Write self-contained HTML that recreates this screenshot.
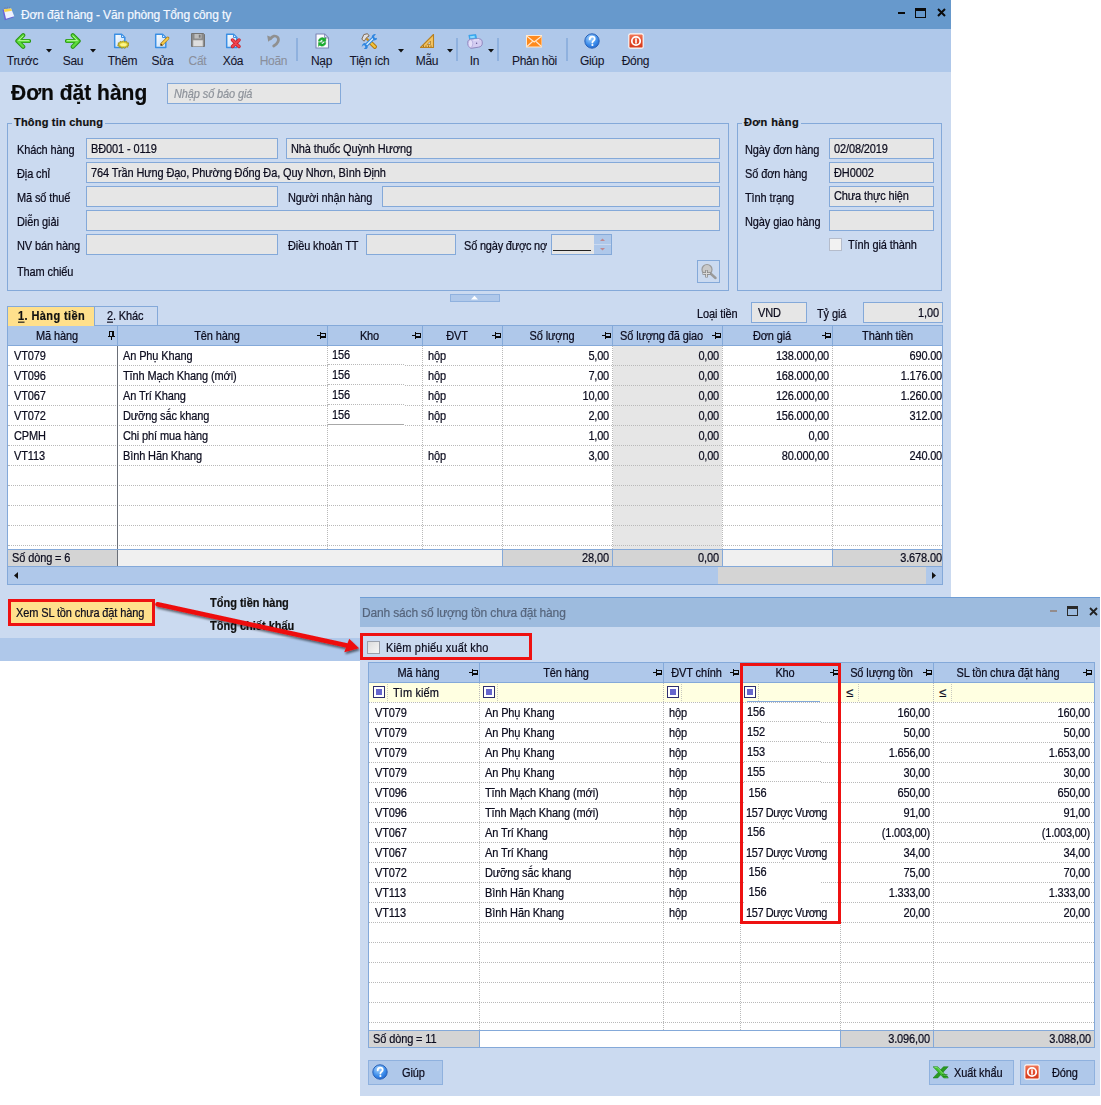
<!DOCTYPE html>
<html><head><meta charset="utf-8"><title>Don dat hang</title><style>
*{box-sizing:border-box;margin:0;padding:0}
html,body{width:1101px;height:1105px;background:#fff;overflow:hidden}
body{font-family:"Liberation Sans",sans-serif;font-size:11px;letter-spacing:-0.12px;color:#0c0c1e;-webkit-text-stroke-width:0.2px;position:relative}
.a{position:absolute}
.t{position:absolute;white-space:nowrap;line-height:14px;height:14px;transform:scaleY(1.12)}
.s{display:inline-block;transform:scaleY(1.12)}
.fld{position:absolute;background:#e6e6e6;border:1px solid #84a9d9;height:21px;line-height:21px;padding-left:4px;white-space:nowrap;overflow:hidden}
.fs{position:absolute;border:1px solid #84a9d9}
.lg{position:absolute;font-weight:bold;font-size:11px;letter-spacing:-0.12px;line-height:14px;background:#cbdaf0;padding:0 2px;white-space:nowrap;color:#111}
.tb{position:absolute;font-size:12px;letter-spacing:-0.3px;-webkit-text-stroke-width:0.08px;line-height:14px;white-space:nowrap;text-align:center;color:#15152a}
.hd{position:absolute;background:#afc8ea;text-align:center;line-height:21px;height:19px;white-space:nowrap;overflow:hidden}
.c{position:absolute;height:20px;line-height:20px;white-space:nowrap;overflow:hidden;transform:scaleY(1.12)}
.r{text-align:right;letter-spacing:-0.2px}
</style></head><body>
<div class="a" style="left:0;top:0;width:951px;height:661px;background:#cbdaf0"></div>
<div class="a" style="left:0;top:0;width:951px;height:29px;background:#6799cc"></div>
<div class="a" style="left:0;top:29px;width:951px;height:43px;background:#afc8ea"></div>
<div class="a" style="left:0;top:638px;width:951px;height:23px;background:#afc8ea"></div>
<div class="t" style="left:21px;top:7px;transform:none;font-size:12px;line-height:16px;height:16px;color:#f4f8ff">Đơn đặt hàng - Văn phòng Tổng công ty</div>
<svg class="a" style="left:0;top:4px" width="18" height="20" viewBox="0 4 18 20"><path d="M2.500 9.500L4.800 20.300 13.800 17.300 11.200 9z" fill="#6a62d8"/><path d="M3.800 9.300l7.300-.8 3.200 7.800-8.300 2.500z" fill="#eef2ff"/><path d="M3.800 9.300l7.300-.8 .9 2.300-7.600 1.200z" fill="#f7d44a"/><path d="M4.600 8.800l.6-1.700M7 8.500l.5-1.700M9.400 8.300l.5-1.600" stroke="#7a6a9a" stroke-width="1" opacity=".6"/></svg>
<div class="a" style="left:898px;top:12px;width:7px;height:2px;background:#0a0a0a"></div>
<div class="a" style="left:915px;top:8px;width:11px;height:10px;border:1px solid #0a0a0a;border-top-width:3px"></div>
<svg class="a" style="left:937px;top:8px" width="9" height="9" viewBox="0 0 9 9"><path d="M1 1l7 7M8 1l-7 7" stroke="#0a0a0a" stroke-width="2"/></svg>
<svg width="0" height="0" class="a"><defs><linearGradient id="gd" x1="0" y1="0" x2="1" y2="1"><stop offset="0" stop-color="#ffffff"/><stop offset="1" stop-color="#bcd9f7"/></linearGradient><linearGradient id="gg" x1="0" y1="0" x2="0" y2="1"><stop offset="0" stop-color="#8ae868"/><stop offset="1" stop-color="#2fb81a"/></linearGradient><radialGradient id="gh" cx=".4" cy=".3" r=".8"><stop offset="0" stop-color="#a9d6ff"/><stop offset=".6" stop-color="#3a8bea"/><stop offset="1" stop-color="#1d5fc8"/></radialGradient><linearGradient id="gr" x1="0" y1="0" x2="0" y2="1"><stop offset="0" stop-color="#f0795a"/><stop offset=".5" stop-color="#e24a2a"/><stop offset="1" stop-color="#d63a1c"/></linearGradient></defs></svg>
<svg class="a" style="left:14.5px;top:32.5px" width="16" height="16" viewBox="0 0 16 16"><path d="M14 8H2.600M8.200 2.300L2.400 8l5.800 5.700" fill="none" stroke="#2a9614" stroke-width="4.200" stroke-linecap="round" stroke-linejoin="round"/><path d="M14 8H2.800M8.200 2.400L2.600 8l5.600 5.600" fill="none" stroke="#5fdc3c" stroke-width="2.300" stroke-linecap="round" stroke-linejoin="round"/><path d="M13.500 7.500H4M8 3L3.500 7.500" fill="none" stroke="#b4f59a" stroke-width=".9" stroke-linecap="round"/></svg>
<div class="tb" style="left:-17.5px;top:53.5px;width:80px;color:#15152a">Trước</div>
<svg class="a" style="left:46px;top:49px" width="6" height="4" viewBox="0 0 6 4"><path d="M0 0h6l-3 3.5z" fill="#111"/></svg>
<svg class="a" style="left:64.5px;top:32.5px" width="16" height="16" viewBox="0 0 16 16"><path d="M2 8h11.400M7.800 2.300L13.600 8l-5.800 5.700" fill="none" stroke="#2a9614" stroke-width="4.200" stroke-linecap="round" stroke-linejoin="round"/><path d="M2 8h11.200M7.800 2.400L13.400 8l-5.600 5.600" fill="none" stroke="#5fdc3c" stroke-width="2.300" stroke-linecap="round" stroke-linejoin="round"/><path d="M2.500 7.500H12M8 3l4.500 4.500" fill="none" stroke="#b4f59a" stroke-width=".9" stroke-linecap="round"/></svg>
<div class="tb" style="left:33px;top:53.5px;width:80px;color:#15152a">Sau</div>
<svg class="a" style="left:90px;top:49px" width="6" height="4" viewBox="0 0 6 4"><path d="M0 0h6l-3 3.5z" fill="#111"/></svg>
<svg class="a" style="left:112.5px;top:32.5px" width="16" height="16" viewBox="0 0 16 16"><path d="M1.700 1.200h6.800l3.300 3.300V14.600H1.700z" fill="url(#gd)" stroke="#3a8fe4" stroke-width="1.500" stroke-linejoin="round"/><path d="M8.500 1.200v3.300h3.300z" fill="#e6f1fd" stroke="#3a8fe4" stroke-width="1" stroke-linejoin="round"/><path d="M10.40 7.70 L11.67 9.01 L13.64 8.32 L13.80 9.83 L15.86 9.98 L14.85 11.22 L16.34 12.16 L14.49 12.72 L14.93 14.15 L12.83 13.87 L12.09 15.34 L10.40 14.30 L8.71 15.34 L7.97 13.87 L5.87 14.15 L6.31 12.72 L4.46 12.16 L5.95 11.22 L4.94 9.98 L7.00 9.83 L7.16 8.32 L9.13 9.01z" fill="#e0d236" stroke="#9c8e14" stroke-width=".8" stroke-linejoin="miter"/><ellipse cx="10.4" cy="11.6" rx="3.300" ry="1.700" fill="#faf58c"/></svg>
<div class="tb" style="left:82.5px;top:53.5px;width:80px;color:#15152a">Thêm</div>
<svg class="a" style="left:154px;top:32.5px" width="16" height="16" viewBox="0 0 16 16"><path d="M1.700 1.200h6.800l3.300 3.300V14.600H1.700z" fill="url(#gd)" stroke="#3a8fe4" stroke-width="1.500" stroke-linejoin="round"/><path d="M8.500 1.200v3.300h3.300z" fill="#e6f1fd" stroke="#3a8fe4" stroke-width="1" stroke-linejoin="round"/><path d="M7.800 11.200l6-6" stroke="#b07c18" stroke-width="3.100" stroke-linecap="round"/><path d="M7.900 11.100l5.800-5.800" stroke="#f9cf4a" stroke-width="1.800" stroke-linecap="round"/><path d="M6.300 12.800l.6-2.400 1.800 1.800z" fill="#3a2a10"/></svg>
<div class="tb" style="left:122.5px;top:53.5px;width:80px;color:#15152a">Sửa</div>
<svg class="a" style="left:190px;top:32px" width="16" height="16" viewBox="0 0 16 16"><path d="M1.500 1.500h12l1 1v12h-13z" fill="#8a8a8a" stroke="#747474" stroke-width="1"/><rect x="4.500" y="2" width="7" height="4.500" fill="#bdbdbd"/><rect x="8.800" y="2.700" width="1.800" height="3" fill="#7a7a7a"/><rect x="3" y="8" width="10" height="6.500" fill="#dedede" stroke="#9a9a9a" stroke-width=".6"/></svg>
<div class="tb" style="left:157.5px;top:53.5px;width:80px;color:#8a8f9c">Cất</div>
<svg class="a" style="left:224.5px;top:32.5px" width="16" height="16" viewBox="0 0 16 16"><path d="M1.700 1.200h6.800l3.300 3.300V14.600H1.700z" fill="url(#gd)" stroke="#3a8fe4" stroke-width="1.500" stroke-linejoin="round"/><path d="M8.500 1.200v3.300h3.300z" fill="#e6f1fd" stroke="#3a8fe4" stroke-width="1" stroke-linejoin="round"/><path d="M7.500 7l6.500 6.500M14 7L7.500 13.500" stroke="#c81e28" stroke-width="3.400" stroke-linecap="round"/><path d="M7.500 7l6.500 6.500M14 7L7.500 13.500" stroke="#f0444e" stroke-width="1.900" stroke-linecap="round"/></svg>
<div class="tb" style="left:193px;top:53.5px;width:80px;color:#15152a">Xóa</div>
<svg class="a" style="left:264.5px;top:32.5px" width="16" height="16" viewBox="0 0 16 16"><path d="M5.500 5.800C7 3 10.500 2 12.500 4.200c2.200 2.500.5 6.300-3.800 8.800" fill="none" stroke="#909090" stroke-width="2.700" stroke-linecap="round"/><path d="M2.200 2.500l5.800 2.300-4.800 4z" fill="#909090"/></svg>
<div class="tb" style="left:233.5px;top:53.5px;width:80px;color:#8a8f9c">Hoãn</div>
<div class="a" style="left:296px;top:38px;width:2px;height:23px;background:#8fb1de"></div>
<svg class="a" style="left:313.5px;top:32.5px" width="16" height="16" viewBox="0 0 16 16"><path d="M2 1h8.500l4 4V15H2z" fill="#fafcff" stroke="#7f86b6" stroke-width="1.100" stroke-linejoin="round"/><path d="M10.500 1v4h4z" fill="#dfe6f2" stroke="#7f86b6" stroke-width=".8"/><path d="M4.300 8.200a3.800 3.800 0 0 1 6.300-2.600l1.200-1.200v4H7.800l1.400-1.400a2 2 0 0 0-3 1.200z" fill="#18b22e" stroke="#0f8a20" stroke-width=".4"/><path d="M12 9.600a3.800 3.800 0 0 1-6.300 2.600l-1.200 1.200v-4h4l-1.400 1.400a2 2 0 0 0 3-1.200z" fill="#18b22e" stroke="#0f8a20" stroke-width=".4"/></svg>
<div class="tb" style="left:281.5px;top:53.5px;width:80px;color:#15152a">Nạp</div>
<svg class="a" style="left:360.5px;top:32.5px" width="16" height="16" viewBox="0 0 16 16"><path d="M6 6l8 8" stroke="#c98f1e" stroke-width="2.300" stroke-linecap="round"/><path d="M10 10l3.800 3.800" stroke="#b37610" stroke-width="4.200" stroke-linecap="round"/><path d="M10 10l3.800 3.800" stroke="#f2c53c" stroke-width="2.300" stroke-linecap="round"/><path d="M.8 6.200L2.800 1.600 6.500.7 8.200 3 5.700 4.400 3.200 8.200z" fill="#e2e0e0" stroke="#7d6a58" stroke-width="1" stroke-linejoin="round"/><path d="M12.800 4.700L4.700 12.800" stroke="#2f86e0" stroke-width="3.600"/><path d="M12 5.500L5.500 12" stroke="#d6f0ff" stroke-width="1.500"/><path d="M10.700 3.600a3.200 3.200 0 0 1 4.300-2.400l-1.900 2 .6 1.700 1.900.3 1-1.600a3.200 3.200 0 0 1-3.300 3.800z" fill="#2f86e0"/><path d="M6.800 13.900a3.200 3.200 0 0 1-4.300 2.400l1.900-2-.6-1.700-1.900-.3-1 1.600a3.200 3.200 0 0 1 3.300-3.800z" fill="#2f86e0"/></svg>
<div class="tb" style="left:329.5px;top:53.5px;width:80px;color:#15152a">Tiện ích</div>
<svg class="a" style="left:398px;top:49px" width="6" height="4" viewBox="0 0 6 4"><path d="M0 0h6l-3 3.5z" fill="#111"/></svg>
<svg class="a" style="left:418.5px;top:32.5px" width="16" height="16" viewBox="0 0 16 16"><path d="M14.500 1.500V14.500H1.500z" fill="#f3c463" stroke="#b8801f" stroke-width="1.100" stroke-linejoin="round"/><path d="M11.500 8v3.500H8z" fill="#b9cfec" stroke="#b8801f" stroke-width=".8" stroke-linejoin="round"/><path d="M4.500 14v-1.600M7 14v-1.600M9.500 14v-1.600M12 14v-1.600" stroke="#8a5a10" stroke-width=".8"/></svg>
<div class="tb" style="left:387px;top:53.5px;width:80px;color:#15152a">Mẫu</div>
<svg class="a" style="left:447px;top:49px" width="6" height="4" viewBox="0 0 6 4"><path d="M0 0h6l-3 3.5z" fill="#111"/></svg>
<div class="a" style="left:456px;top:38px;width:2px;height:23px;background:#8fb1de"></div>
<svg class="a" style="left:466.5px;top:32.5px" width="16" height="16" viewBox="0 0 16 16"><path d="M1.800 2.300l7-.8 1.100 5.200-7 .5z" fill="#38aef4" stroke="#2a94e0" stroke-width=".6" stroke-linejoin="round"/><path d="M3 3.300l4.500-.5.400 2-4.500.4z" fill="#8fdcff"/><path d="M.7 9.500C.7 7 2.800 5.900 5.500 6l7-.2c2 .2 2.800 2 2.800 4.200 0 2.500-1.300 3.800-3.800 4.200L5 15.200C2.200 15.500.7 13 .7 9.500z" fill="#d3ccf1" stroke="#8a7fb8" stroke-width=".9"/><ellipse cx="3.500" cy="10.600" rx="2.300" ry="3.900" fill="#e4dff9" stroke="#a59cd4" stroke-width=".6"/><circle cx="9.600" cy="10.200" r=".7" fill="#5f5590"/><path d="M6.500 7l5.500-.3" stroke="#f0ecff" stroke-width="1"/></svg>
<div class="tb" style="left:434.5px;top:53.5px;width:80px;color:#15152a">In</div>
<svg class="a" style="left:488px;top:49px" width="6" height="4" viewBox="0 0 6 4"><path d="M0 0h6l-3 3.5z" fill="#111"/></svg>
<div class="a" style="left:497px;top:38px;width:2px;height:23px;background:#8fb1de"></div>
<svg class="a" style="left:526px;top:32.5px" width="16" height="16" viewBox="0 0 16 16"><rect x=".5" y="2.500" width="15.500" height="11.500" fill="#ff8a1c" stroke="#ffe9cf" stroke-width="1"/><path d="M1 3.200l7.200 5.800 7.300-5.800M1 13.500l5.500-5M15.500 13.500l-5.500-5" fill="none" stroke="#ffe9d0" stroke-width="1.100"/></svg>
<div class="tb" style="left:494.5px;top:53.5px;width:80px;color:#15152a">Phản hồi</div>
<div class="a" style="left:566px;top:38px;width:2px;height:23px;background:#8fb1de"></div>
<svg class="a" style="left:583.5px;top:32.5px" width="16" height="16" viewBox="0 0 16 16"><circle cx="8" cy="8" r="7.200" fill="url(#gh)" stroke="#2a62b8" stroke-width="1"/><path d="M5.700 6.300c0-1.600 1.100-2.600 2.500-2.600 1.500 0 2.500.9 2.500 2.200 0 1.800-2.300 1.900-2.300 3.600" fill="none" stroke="#fff" stroke-width="1.800" stroke-linecap="round"/><circle cx="8.400" cy="12" r="1.100" fill="#fff"/></svg>
<div class="tb" style="left:552px;top:53.5px;width:80px;color:#15152a">Giúp</div>
<svg class="a" style="left:628px;top:32.5px" width="16" height="16" viewBox="0 0 16 16"><rect x=".3" y=".3" width="15.400" height="15.400" rx="2" fill="#fff6f2"/><rect x="1.400" y="1.400" width="13.200" height="13.200" rx="1.200" fill="url(#gr)"/><circle cx="8" cy="8" r="4.200" fill="none" stroke="#fff" stroke-width="1.800"/><path d="M8 6v4" stroke="#fff" stroke-width="1.600" stroke-linecap="round"/></svg>
<div class="tb" style="left:595.5px;top:53.5px;width:80px;color:#15152a">Đóng</div>
<div class="t" style="left:11px;top:79px;font-size:21px;font-weight:bold;line-height:28px;height:28px;color:#0a0a0a;letter-spacing:0;transform:scaleY(1.06)">Đơn đặt hàng</div>
<div class="fld" style="left:167px;top:83px;width:174px;font-style:italic;color:#8e939b;padding-left:6px"><span class="s">Nhập số báo giá</span></div>
<div class="fs" style="left:7px;top:123px;width:722px;height:168px"></div>
<div class="lg" style="left:12px;top:115px;letter-spacing:.2px">Thông tin chung</div>
<div class="t" style="left:17px;top:143px;">Khách hàng</div>
<div class="t" style="left:17px;top:167px;">Địa chỉ</div>
<div class="t" style="left:17px;top:191px;">Mã số thuế</div>
<div class="t" style="left:17px;top:215px;">Diễn giải</div>
<div class="t" style="left:17px;top:239px;">NV bán hàng</div>
<div class="t" style="left:17px;top:265px;">Tham chiếu</div>
<div class="fld" style="left:86px;top:138px;width:192px;"><span class="s">BĐ001 - 0119</span></div>
<div class="fld" style="left:286px;top:138px;width:434px;"><span class="s">Nhà thuốc Quỳnh Hương</span></div>
<div class="fld" style="left:86px;top:162px;width:634px;letter-spacing:-0.12px"><span class="s">764 Trần Hưng Đạo, Phường Đống Đa, Quy Nhơn, Bình Định</span></div>
<div class="fld" style="left:86px;top:186px;width:192px;"><span class="s"></span></div>
<div class="t" style="left:288px;top:191px;">Người nhận hàng</div>
<div class="fld" style="left:382px;top:186px;width:338px;"><span class="s"></span></div>
<div class="fld" style="left:86px;top:210px;width:634px;"><span class="s"></span></div>
<div class="fld" style="left:86px;top:234px;width:192px;"><span class="s"></span></div>
<div class="t" style="left:288px;top:239px;">Điều khoản TT</div>
<div class="fld" style="left:366px;top:234px;width:90px;"><span class="s"></span></div>
<div class="t" style="left:464px;top:239px;letter-spacing:-0.2px">Số ngày được nợ</div>
<div class="a" style="left:551px;top:234px;width:61px;height:21px;background:#e6e6e6;border:1px solid #84a9d9"></div>
<div class="a" style="left:553px;top:250px;width:38px;height:1px;background:#222"></div>
<div class="a" style="left:594px;top:235px;width:17px;height:19px;background:#afc8ea"></div>
<div class="a" style="left:594px;top:244px;width:17px;height:1px;background:#cbdaf0"></div>
<svg class="a" style="left:600px;top:238px" width="5" height="14" viewBox="0 0 5 14"><path d="M0 3l2.500-2.500L5 3z" fill="#c08890"/><path d="M0 10l2.500 2.500L5 10z" fill="#c08890"/></svg>
<div class="a" style="left:697px;top:260px;width:23px;height:23px;background:#cbdaf0;border:1px solid #84a9d9"></div>
<svg class="a" style="left:700px;top:263px" width="17" height="17" viewBox="0 0 17 17"><circle cx="7" cy="6.500" r="5" fill="#c9c9c9" stroke="#9a9a9a" stroke-width="1.200"/><path d="M10.500 10.500l5 4.500" stroke="#9a9a9a" stroke-width="2.400" stroke-linecap="round"/><path d="M2.500 10.500h8M6.500 7v7.500" stroke="#8a8a8a" stroke-width="2.600"/><path d="M3 10.500h7M6.500 7.500v6.500" stroke="#d8d8d8" stroke-width="1"/></svg>
<div class="a" style="left:450px;top:294px;width:50px;height:8px;background:#afc8ea;border:1px solid #8fb1de"></div>
<svg class="a" style="left:471px;top:295px" width="7" height="5" viewBox="0 0 7 5"><path d="M0 4.500L3.500 .8 7 4.500z" fill="#fff"/></svg>
<div class="fs" style="left:737px;top:123px;width:205px;height:168px"></div>
<div class="lg" style="left:742px;top:115px;letter-spacing:.4px">Đơn hàng</div>
<div class="t" style="left:745px;top:143px;">Ngày đơn hàng</div>
<div class="t" style="left:745px;top:167px;">Số đơn hàng</div>
<div class="t" style="left:745px;top:191px;">Tình trạng</div>
<div class="t" style="left:745px;top:215px;">Ngày giao hàng</div>
<div class="fld" style="left:829px;top:138px;width:105px;"><span class="s">02/08/2019</span></div>
<div class="fld" style="left:829px;top:162px;width:105px;"><span class="s">ĐH0002</span></div>
<div class="fld" style="left:829px;top:186px;width:105px;line-height:19px"><span class="s">Chưa thực hiện</span></div>
<div class="fld" style="left:829px;top:210px;width:105px;"><span class="s"></span></div>
<div class="a" style="left:829px;top:238px;width:13px;height:13px;background:#f2f2f2;border:1px solid #b5bccb"></div>
<div class="t" style="left:848px;top:238px;">Tính giá thành</div>
<div class="t" style="left:697px;top:307px;">Loại tiền</div>
<div class="fld" style="left:751px;top:302px;width:56px;padding-left:6px"><span class="s">VND</span></div>
<div class="t" style="left:817px;top:307px;">Tỷ giá</div>
<div class="fld" style="left:863px;top:302px;width:80px;text-align:right;padding-right:3px"><span class="s">1,00</span></div>
<div class="a" style="left:7px;top:325px;width:936px;height:260px;background:#fff;border:1px solid #84a9d9"></div>
<div class="a" style="left:8px;top:326px;width:934px;height:20px;background:#afc8ea;border-bottom:1px solid #84a9d9"></div>
<div class="hd" style="left:8px;top:326px;width:109px;padding-right:11px;"><span class="s">Mã hàng</span><svg class="a" style="right:2px;top:5px" width="7" height="9" viewBox="0 0 7 9" shape-rendering="crispEdges"><path d="M1 0h5v1H1zM1 0h1v5H1zM4 0h2v5H4zM0 5h7v1H0zM3 6h1v3H3z" fill="#0a0a0a"/></svg></div>
<div class="hd" style="left:118px;top:326px;width:209px;padding-right:11px;"><span class="s">Tên hàng</span><svg class="a" style="right:1px;top:6px" width="9" height="7" viewBox="0 0 9 7" shape-rendering="crispEdges"><path d="M0 3h3v1H0zM3 0h1v7H3zM4 1h5v1H4zM8 1h1v5H8zM4 4h5v2H4z" fill="#0a0a0a"/></svg></div>
<div class="a" style="left:117px;top:326px;width:1px;height:20px;background:#84a9d9"></div>
<div class="hd" style="left:328px;top:326px;width:94px;padding-right:11px;"><span class="s">Kho</span><svg class="a" style="right:1px;top:6px" width="9" height="7" viewBox="0 0 9 7" shape-rendering="crispEdges"><path d="M0 3h3v1H0zM3 0h1v7H3zM4 1h5v1H4zM8 1h1v5H8zM4 4h5v2H4z" fill="#0a0a0a"/></svg></div>
<div class="a" style="left:327px;top:326px;width:1px;height:20px;background:#84a9d9"></div>
<div class="hd" style="left:423px;top:326px;width:79px;padding-right:11px;"><span class="s">ĐVT</span><svg class="a" style="right:1px;top:6px" width="9" height="7" viewBox="0 0 9 7" shape-rendering="crispEdges"><path d="M0 3h3v1H0zM3 0h1v7H3zM4 1h5v1H4zM8 1h1v5H8zM4 4h5v2H4z" fill="#0a0a0a"/></svg></div>
<div class="a" style="left:422px;top:326px;width:1px;height:20px;background:#84a9d9"></div>
<div class="hd" style="left:503px;top:326px;width:109px;padding-right:11px;"><span class="s">Số lượng</span><svg class="a" style="right:1px;top:6px" width="9" height="7" viewBox="0 0 9 7" shape-rendering="crispEdges"><path d="M0 3h3v1H0zM3 0h1v7H3zM4 1h5v1H4zM8 1h1v5H8zM4 4h5v2H4z" fill="#0a0a0a"/></svg></div>
<div class="a" style="left:502px;top:326px;width:1px;height:20px;background:#84a9d9"></div>
<div class="hd" style="left:613px;top:326px;width:109px;padding-right:11px;padding-left:7px;text-align:left;"><span class="s">Số lượng đã giao</span><svg class="a" style="right:1px;top:6px" width="9" height="7" viewBox="0 0 9 7" shape-rendering="crispEdges"><path d="M0 3h3v1H0zM3 0h1v7H3zM4 1h5v1H4zM8 1h1v5H8zM4 4h5v2H4z" fill="#0a0a0a"/></svg></div>
<div class="a" style="left:612px;top:326px;width:1px;height:20px;background:#84a9d9"></div>
<div class="hd" style="left:723px;top:326px;width:109px;padding-right:11px;"><span class="s">Đơn giá</span><svg class="a" style="right:1px;top:6px" width="9" height="7" viewBox="0 0 9 7" shape-rendering="crispEdges"><path d="M0 3h3v1H0zM3 0h1v7H3zM4 1h5v1H4zM8 1h1v5H8zM4 4h5v2H4z" fill="#0a0a0a"/></svg></div>
<div class="a" style="left:722px;top:326px;width:1px;height:20px;background:#84a9d9"></div>
<div class="hd" style="left:833px;top:326px;width:109px;padding-right:0px;"><span class="s">Thành tiền</span></div>
<div class="a" style="left:832px;top:326px;width:1px;height:20px;background:#84a9d9"></div>
<div class="a" style="left:7px;top:306px;width:88px;height:20px;background:#ffe08c;border:1px solid #84a9d9;border-bottom:none"></div>
<div class="t" style="left:18px;top:309px;font-weight:bold;font-size:11px;letter-spacing:.4px;color:#111"><u>1</u>. Hàng tiền</div>
<div class="a" style="left:94px;top:306px;width:64px;height:19px;background:#cbdaf0;border:1px solid #84a9d9;border-bottom:none"></div>
<div class="t" style="left:107px;top:309px"><u>2</u>. Khác</div>
<div class="a" style="left:613px;top:346px;width:109px;height:203px;background:#e6e6e6"></div>
<div class="a" style="left:8px;top:365px;width:934px;height:0;border-top:1px dotted #b9b9b9"></div>
<div class="a" style="left:8px;top:385px;width:934px;height:0;border-top:1px dotted #b9b9b9"></div>
<div class="a" style="left:8px;top:405px;width:934px;height:0;border-top:1px dotted #b9b9b9"></div>
<div class="a" style="left:8px;top:425px;width:934px;height:0;border-top:1px dotted #b9b9b9"></div>
<div class="a" style="left:8px;top:445px;width:934px;height:0;border-top:1px dotted #b9b9b9"></div>
<div class="a" style="left:8px;top:465px;width:934px;height:0;border-top:1px dotted #b9b9b9"></div>
<div class="a" style="left:8px;top:485px;width:934px;height:0;border-top:1px dotted #b9b9b9"></div>
<div class="a" style="left:8px;top:505px;width:934px;height:0;border-top:1px dotted #b9b9b9"></div>
<div class="a" style="left:8px;top:525px;width:934px;height:0;border-top:1px dotted #b9b9b9"></div>
<div class="a" style="left:8px;top:545px;width:934px;height:0;border-top:1px dotted #b9b9b9"></div>
<div class="a" style="left:117px;top:346px;width:1px;height:203px;background:#6a6f78"></div>
<div class="a" style="left:327px;top:346px;width:0;height:203px;border-left:1px dotted #b9b9b9"></div>
<div class="a" style="left:422px;top:346px;width:0;height:203px;border-left:1px dotted #b9b9b9"></div>
<div class="a" style="left:502px;top:346px;width:0;height:203px;border-left:1px dotted #b9b9b9"></div>
<div class="a" style="left:612px;top:346px;width:0;height:203px;border-left:1px dotted #b9b9b9"></div>
<div class="a" style="left:722px;top:346px;width:0;height:203px;border-left:1px dotted #b9b9b9"></div>
<div class="a" style="left:832px;top:346px;width:0;height:203px;border-left:1px dotted #b9b9b9"></div>
<div class="c" style="left:8px;top:346px;width:109px;padding-left:6px">VT079</div>
<div class="c" style="left:118px;top:346px;width:209px;padding-left:5px">An Phụ Khang</div>
<div class="a" style="left:328px;top:346px;width:76px;height:20px;background:#fff"></div>
<div class="a" style="left:328px;top:364px;width:76px;height:0;border-top:1px dotted #b9b9b9"></div>
<div class="c" style="left:332px;top:345px;width:60px">156</div>
<div class="c" style="left:423px;top:346px;width:79px;padding-left:5px">hộp</div>
<div class="c r" style="left:503px;top:346px;width:109px;padding-right:3px">5,00</div>
<div class="c r" style="left:613px;top:346px;width:109px;padding-right:3px">0,00</div>
<div class="c r" style="left:723px;top:346px;width:109px;padding-right:3px">138.000,00</div>
<div class="c r" style="left:833px;top:346px;width:109px;padding-right:0px">690.00</div>
<div class="c" style="left:8px;top:366px;width:109px;padding-left:6px">VT096</div>
<div class="c" style="left:118px;top:366px;width:209px;padding-left:5px">Tĩnh Mạch Khang (mới)</div>
<div class="a" style="left:328px;top:366px;width:76px;height:20px;background:#fff"></div>
<div class="a" style="left:328px;top:384px;width:76px;height:0;border-top:1px dotted #b9b9b9"></div>
<div class="c" style="left:332px;top:365px;width:60px">156</div>
<div class="c" style="left:423px;top:366px;width:79px;padding-left:5px">hộp</div>
<div class="c r" style="left:503px;top:366px;width:109px;padding-right:3px">7,00</div>
<div class="c r" style="left:613px;top:366px;width:109px;padding-right:3px">0,00</div>
<div class="c r" style="left:723px;top:366px;width:109px;padding-right:3px">168.000,00</div>
<div class="c r" style="left:833px;top:366px;width:109px;padding-right:0px">1.176.00</div>
<div class="c" style="left:8px;top:386px;width:109px;padding-left:6px">VT067</div>
<div class="c" style="left:118px;top:386px;width:209px;padding-left:5px">An Trí Khang</div>
<div class="a" style="left:328px;top:386px;width:76px;height:20px;background:#fff"></div>
<div class="a" style="left:328px;top:404px;width:76px;height:0;border-top:1px dotted #b9b9b9"></div>
<div class="c" style="left:332px;top:385px;width:60px">156</div>
<div class="c" style="left:423px;top:386px;width:79px;padding-left:5px">hộp</div>
<div class="c r" style="left:503px;top:386px;width:109px;padding-right:3px">10,00</div>
<div class="c r" style="left:613px;top:386px;width:109px;padding-right:3px">0,00</div>
<div class="c r" style="left:723px;top:386px;width:109px;padding-right:3px">126.000,00</div>
<div class="c r" style="left:833px;top:386px;width:109px;padding-right:0px">1.260.00</div>
<div class="c" style="left:8px;top:406px;width:109px;padding-left:6px">VT072</div>
<div class="c" style="left:118px;top:406px;width:209px;padding-left:5px">Dưỡng sắc khang</div>
<div class="a" style="left:328px;top:406px;width:76px;height:20px;background:#fff"></div>
<div class="a" style="left:328px;top:424px;width:76px;height:1px;background:#a8a8a8"></div>
<div class="c" style="left:332px;top:405px;width:60px">156</div>
<div class="c" style="left:423px;top:406px;width:79px;padding-left:5px">hộp</div>
<div class="c r" style="left:503px;top:406px;width:109px;padding-right:3px">2,00</div>
<div class="c r" style="left:613px;top:406px;width:109px;padding-right:3px">0,00</div>
<div class="c r" style="left:723px;top:406px;width:109px;padding-right:3px">156.000,00</div>
<div class="c r" style="left:833px;top:406px;width:109px;padding-right:0px">312.00</div>
<div class="c" style="left:8px;top:426px;width:109px;padding-left:6px">CPMH</div>
<div class="c" style="left:118px;top:426px;width:209px;padding-left:5px">Chi phí mua hàng</div>
<div class="c r" style="left:503px;top:426px;width:109px;padding-right:3px">1,00</div>
<div class="c r" style="left:613px;top:426px;width:109px;padding-right:3px">0,00</div>
<div class="c r" style="left:723px;top:426px;width:109px;padding-right:3px">0,00</div>
<div class="c" style="left:8px;top:446px;width:109px;padding-left:6px">VT113</div>
<div class="c" style="left:118px;top:446px;width:209px;padding-left:5px">Bình Hãn Khang</div>
<div class="c" style="left:423px;top:446px;width:79px;padding-left:5px">hộp</div>
<div class="c r" style="left:503px;top:446px;width:109px;padding-right:3px">3,00</div>
<div class="c r" style="left:613px;top:446px;width:109px;padding-right:3px">0,00</div>
<div class="c r" style="left:723px;top:446px;width:109px;padding-right:3px">80.000,00</div>
<div class="c r" style="left:833px;top:446px;width:109px;padding-right:0px">240.00</div>
<div class="a" style="left:8px;top:549px;width:934px;height:18px;background:#f0f0f0;border-top:1px solid #84a9d9;border-bottom:1px solid #84a9d9"></div>
<div class="a" style="left:8px;top:550px;width:109px;height:16px;line-height:16px;background:#d4d4d4;white-space:nowrap;overflow:hidden;padding-left:4px"><span class="s">Số dòng = 6</span></div>
<div class="a" style="left:503px;top:550px;width:109px;height:16px;line-height:16px;background:#d4d4d4;white-space:nowrap;overflow:hidden;text-align:right;padding-right:3px"><span class="s">28,00</span></div>
<div class="a" style="left:613px;top:550px;width:109px;height:16px;line-height:16px;background:#d4d4d4;white-space:nowrap;overflow:hidden;text-align:right;padding-right:3px"><span class="s">0,00</span></div>
<div class="a" style="left:833px;top:550px;width:109px;height:16px;line-height:16px;background:#d4d4d4;white-space:nowrap;overflow:hidden;text-align:right;padding-right:0px"><span class="s">3.678.00</span></div>
<div class="a" style="left:117px;top:550px;width:1px;height:16px;background:#6a6f78"></div>
<div class="a" style="left:502px;top:550px;width:1px;height:16px;background:#84a9d9"></div>
<div class="a" style="left:612px;top:550px;width:1px;height:16px;background:#84a9d9"></div>
<div class="a" style="left:722px;top:550px;width:1px;height:16px;background:#84a9d9"></div>
<div class="a" style="left:832px;top:550px;width:1px;height:16px;background:#84a9d9"></div>
<div class="a" style="left:8px;top:567px;width:934px;height:17px;background:#afc8ea"></div>
<div class="a" style="left:718px;top:567px;width:208px;height:17px;background:#d4d4d4"></div>
<svg class="a" style="left:14px;top:572px" width="4" height="7" viewBox="0 0 4 7"><path d="M4 0v7L0 3.500z" fill="#111"/></svg>
<svg class="a" style="left:932px;top:572px" width="4" height="7" viewBox="0 0 4 7"><path d="M0 0v7L4 3.500z" fill="#111"/></svg>
<div class="a" style="left:8px;top:599px;width:147px;height:27px;background:#ffe08c;border:3px solid #ee1111"></div>
<div class="t" style="left:16px;top:606px">Xem SL tồn chưa đặt hàng</div>
<div class="t" style="left:210px;top:596px;font-weight:bold;letter-spacing:0;color:#111">Tổng tiền hàng</div>
<div class="t" style="left:210px;top:619px;font-weight:bold;letter-spacing:0;color:#111">Tổng chiết khấu</div>
<div class="a" style="left:360px;top:597px;width:740px;height:499px;background:#cbdaf0"></div>
<div class="a" style="left:360px;top:597px;width:740px;height:30px;background:#9dbbde;border-top:1px solid #6f9dd4"></div>
<div class="t" style="left:362px;top:605px;font-size:12px;line-height:16px;height:16px;color:#56657c;letter-spacing:-0.16px">Danh sách số lượng tồn chưa đặt hàng</div>
<div class="a" style="left:1050px;top:610px;width:7px;height:2px;background:#948c8c"></div>
<div class="a" style="left:1067px;top:606px;width:11px;height:10px;border:1px solid #2a2a2a;border-top-width:3px"></div>
<svg class="a" style="left:1089px;top:606.5px" width="9" height="9" viewBox="0 0 9 9"><path d="M1 1l7 7M8 1l-7 7" stroke="#222" stroke-width="1.800"/></svg>
<div class="a" style="left:360px;top:633px;width:172px;height:27px;border:3px solid #ee1111"></div>
<div class="a" style="left:367px;top:641px;width:13px;height:13px;background:linear-gradient(135deg,#dcdcdc,#f6f6f6);border:1px solid #9aa0ab"></div>
<div class="t" style="left:386px;top:641px;letter-spacing:.15px">Kiêm phiếu xuất kho</div>
<div class="a" style="left:368px;top:662px;width:727px;height:386px;background:#fff;border:1px solid #84a9d9"></div>
<div class="a" style="left:369px;top:663px;width:725px;height:20px;background:#afc8ea;border-bottom:1px solid #84a9d9"></div>
<div class="hd" style="left:369px;top:663px;width:110px;padding-right:11px"><span class="s">Mã hàng</span><svg class="a" style="right:1px;top:6px" width="9" height="7" viewBox="0 0 9 7" shape-rendering="crispEdges"><path d="M0 3h3v1H0zM3 0h1v7H3zM4 1h5v1H4zM8 1h1v5H8zM4 4h5v2H4z" fill="#0a0a0a"/></svg></div>
<div class="hd" style="left:480px;top:663px;width:183px;padding-right:11px"><span class="s">Tên hàng</span><svg class="a" style="right:1px;top:6px" width="9" height="7" viewBox="0 0 9 7" shape-rendering="crispEdges"><path d="M0 3h3v1H0zM3 0h1v7H3zM4 1h5v1H4zM8 1h1v5H8zM4 4h5v2H4z" fill="#0a0a0a"/></svg></div>
<div class="a" style="left:479px;top:663px;width:1px;height:20px;background:#84a9d9"></div>
<div class="hd" style="left:664px;top:663px;width:76px;padding-right:11px"><span class="s">ĐVT chính</span><svg class="a" style="right:1px;top:6px" width="9" height="7" viewBox="0 0 9 7" shape-rendering="crispEdges"><path d="M0 3h3v1H0zM3 0h1v7H3zM4 1h5v1H4zM8 1h1v5H8zM4 4h5v2H4z" fill="#0a0a0a"/></svg></div>
<div class="a" style="left:663px;top:663px;width:1px;height:20px;background:#84a9d9"></div>
<div class="hd" style="left:741px;top:663px;width:99px;padding-right:11px"><span class="s">Kho</span><svg class="a" style="right:1px;top:6px" width="9" height="7" viewBox="0 0 9 7" shape-rendering="crispEdges"><path d="M0 3h3v1H0zM3 0h1v7H3zM4 1h5v1H4zM8 1h1v5H8zM4 4h5v2H4z" fill="#0a0a0a"/></svg></div>
<div class="a" style="left:740px;top:663px;width:1px;height:20px;background:#84a9d9"></div>
<div class="hd" style="left:841px;top:663px;width:92px;padding-right:11px"><span class="s">Số lượng tồn</span><svg class="a" style="right:1px;top:6px" width="9" height="7" viewBox="0 0 9 7" shape-rendering="crispEdges"><path d="M0 3h3v1H0zM3 0h1v7H3zM4 1h5v1H4zM8 1h1v5H8zM4 4h5v2H4z" fill="#0a0a0a"/></svg></div>
<div class="a" style="left:840px;top:663px;width:1px;height:20px;background:#84a9d9"></div>
<div class="hd" style="left:934px;top:663px;width:159px;padding-right:11px"><span class="s">SL tồn chưa đặt hàng</span><svg class="a" style="right:1px;top:6px" width="9" height="7" viewBox="0 0 9 7" shape-rendering="crispEdges"><path d="M0 3h3v1H0zM3 0h1v7H3zM4 1h5v1H4zM8 1h1v5H8zM4 4h5v2H4z" fill="#0a0a0a"/></svg></div>
<div class="a" style="left:933px;top:663px;width:1px;height:20px;background:#84a9d9"></div>
<div class="a" style="left:369px;top:683px;width:725px;height:19px;background:#ffffe1"></div>
<div class="a" style="left:373px;top:686px;width:12px;height:12px;background:#fff;border:1px solid #2e2e6e"></div>
<div class="a" style="left:376px;top:689px;width:6px;height:6px;background:#6666cc"></div>
<div class="a" style="left:387px;top:684px;width:0;height:17px;border-left:1px dotted #c9c9c0"></div>
<div class="a" style="left:483px;top:686px;width:12px;height:12px;background:#fff;border:1px solid #2e2e6e"></div>
<div class="a" style="left:486px;top:689px;width:6px;height:6px;background:#6666cc"></div>
<div class="a" style="left:497px;top:684px;width:0;height:17px;border-left:1px dotted #c9c9c0"></div>
<div class="a" style="left:667px;top:686px;width:12px;height:12px;background:#fff;border:1px solid #2e2e6e"></div>
<div class="a" style="left:670px;top:689px;width:6px;height:6px;background:#6666cc"></div>
<div class="a" style="left:681px;top:684px;width:0;height:17px;border-left:1px dotted #c9c9c0"></div>
<div class="a" style="left:744px;top:686px;width:12px;height:12px;background:#fff;border:1px solid #2e2e6e"></div>
<div class="a" style="left:747px;top:689px;width:6px;height:6px;background:#6666cc"></div>
<div class="a" style="left:758px;top:684px;width:0;height:17px;border-left:1px dotted #c9c9c0"></div>
<div class="t" style="left:393px;top:686px;letter-spacing:.1px">Tìm kiếm</div>
<div class="t" style="left:846px;top:686px;font-size:13px;transform:none">≤</div>
<div class="a" style="left:858px;top:684px;width:0;height:17px;border-left:1px dotted #c9c9c0"></div>
<div class="t" style="left:939px;top:686px;font-size:13px;transform:none">≤</div>
<div class="a" style="left:951px;top:684px;width:0;height:17px;border-left:1px dotted #c9c9c0"></div>
<div class="a" style="left:369px;top:702px;width:725px;height:0;border-top:1px dotted #b9b9b9"></div>
<div class="a" style="left:369px;top:722px;width:725px;height:0;border-top:1px dotted #b9b9b9"></div>
<div class="a" style="left:369px;top:742px;width:725px;height:0;border-top:1px dotted #b9b9b9"></div>
<div class="a" style="left:369px;top:762px;width:725px;height:0;border-top:1px dotted #b9b9b9"></div>
<div class="a" style="left:369px;top:782px;width:725px;height:0;border-top:1px dotted #b9b9b9"></div>
<div class="a" style="left:369px;top:802px;width:725px;height:0;border-top:1px dotted #b9b9b9"></div>
<div class="a" style="left:369px;top:822px;width:725px;height:0;border-top:1px dotted #b9b9b9"></div>
<div class="a" style="left:369px;top:842px;width:725px;height:0;border-top:1px dotted #b9b9b9"></div>
<div class="a" style="left:369px;top:862px;width:725px;height:0;border-top:1px dotted #b9b9b9"></div>
<div class="a" style="left:369px;top:882px;width:725px;height:0;border-top:1px dotted #b9b9b9"></div>
<div class="a" style="left:369px;top:902px;width:725px;height:0;border-top:1px dotted #b9b9b9"></div>
<div class="a" style="left:369px;top:922px;width:725px;height:0;border-top:1px dotted #b9b9b9"></div>
<div class="a" style="left:369px;top:942px;width:725px;height:0;border-top:1px dotted #b9b9b9"></div>
<div class="a" style="left:369px;top:962px;width:725px;height:0;border-top:1px dotted #b9b9b9"></div>
<div class="a" style="left:369px;top:982px;width:725px;height:0;border-top:1px dotted #b9b9b9"></div>
<div class="a" style="left:369px;top:1002px;width:725px;height:0;border-top:1px dotted #b9b9b9"></div>
<div class="a" style="left:369px;top:1022px;width:725px;height:0;border-top:1px dotted #b9b9b9"></div>
<div class="a" style="left:479px;top:683px;width:0;height:347px;border-left:1px dotted #b9b9b9"></div>
<div class="a" style="left:663px;top:683px;width:0;height:347px;border-left:1px dotted #b9b9b9"></div>
<div class="a" style="left:740px;top:683px;width:0;height:347px;border-left:1px dotted #b9b9b9"></div>
<div class="a" style="left:840px;top:683px;width:0;height:347px;border-left:1px dotted #b9b9b9"></div>
<div class="a" style="left:933px;top:683px;width:0;height:347px;border-left:1px dotted #b9b9b9"></div>
<div class="c" style="left:369px;top:703px;width:110px;padding-left:6px">VT079</div>
<div class="c" style="left:480px;top:703px;width:183px;padding-left:5px">An Phụ Khang</div>
<div class="c" style="left:664px;top:703px;width:76px;padding-left:5px">hộp</div>
<div class="a" style="left:744px;top:703px;width:77px;height:20px;background:#fff"></div>
<div class="a" style="left:744px;top:721px;width:77px;height:0;border-top:1px dotted #b9b9b9"></div>
<div class="a" style="left:747px;top:701px;width:73px;height:1px;background:#84a9d9"></div>
<div class="c" style="left:747px;top:702px;width:60px">156</div>
<div class="c r" style="left:841px;top:703px;width:92px;padding-right:3px">160,00</div>
<div class="c r" style="left:934px;top:703px;width:159px;padding-right:3px">160,00</div>
<div class="c" style="left:369px;top:723px;width:110px;padding-left:6px">VT079</div>
<div class="c" style="left:480px;top:723px;width:183px;padding-left:5px">An Phụ Khang</div>
<div class="c" style="left:664px;top:723px;width:76px;padding-left:5px">hộp</div>
<div class="a" style="left:744px;top:723px;width:77px;height:20px;background:#fff"></div>
<div class="a" style="left:744px;top:741px;width:77px;height:0;border-top:1px dotted #b9b9b9"></div>
<div class="c" style="left:747px;top:722px;width:60px">152</div>
<div class="c r" style="left:841px;top:723px;width:92px;padding-right:3px">50,00</div>
<div class="c r" style="left:934px;top:723px;width:159px;padding-right:3px">50,00</div>
<div class="c" style="left:369px;top:743px;width:110px;padding-left:6px">VT079</div>
<div class="c" style="left:480px;top:743px;width:183px;padding-left:5px">An Phụ Khang</div>
<div class="c" style="left:664px;top:743px;width:76px;padding-left:5px">hộp</div>
<div class="a" style="left:744px;top:743px;width:77px;height:20px;background:#fff"></div>
<div class="a" style="left:744px;top:761px;width:77px;height:0;border-top:1px dotted #b9b9b9"></div>
<div class="c" style="left:747px;top:742px;width:60px">153</div>
<div class="c r" style="left:841px;top:743px;width:92px;padding-right:3px">1.656,00</div>
<div class="c r" style="left:934px;top:743px;width:159px;padding-right:3px">1.653,00</div>
<div class="c" style="left:369px;top:763px;width:110px;padding-left:6px">VT079</div>
<div class="c" style="left:480px;top:763px;width:183px;padding-left:5px">An Phụ Khang</div>
<div class="c" style="left:664px;top:763px;width:76px;padding-left:5px">hộp</div>
<div class="a" style="left:744px;top:763px;width:77px;height:20px;background:#fff"></div>
<div class="a" style="left:744px;top:781px;width:77px;height:0;border-top:1px dotted #b9b9b9"></div>
<div class="c" style="left:747px;top:762px;width:60px">155</div>
<div class="c r" style="left:841px;top:763px;width:92px;padding-right:3px">30,00</div>
<div class="c r" style="left:934px;top:763px;width:159px;padding-right:3px">30,00</div>
<div class="c" style="left:369px;top:783px;width:110px;padding-left:6px">VT096</div>
<div class="c" style="left:480px;top:783px;width:183px;padding-left:5px">Tĩnh Mạch Khang (mới)</div>
<div class="c" style="left:664px;top:783px;width:76px;padding-left:5px">hộp</div>
<div class="a" style="left:744px;top:783px;width:77px;height:20px;background:#fff"></div>
<div class="c" style="left:748.5px;top:783px;width:60px">156</div>
<div class="c r" style="left:841px;top:783px;width:92px;padding-right:3px">650,00</div>
<div class="c r" style="left:934px;top:783px;width:159px;padding-right:3px">650,00</div>
<div class="c" style="left:369px;top:803px;width:110px;padding-left:6px">VT096</div>
<div class="c" style="left:480px;top:803px;width:183px;padding-left:5px">Tĩnh Mạch Khang (mới)</div>
<div class="c" style="left:664px;top:803px;width:76px;padding-left:5px">hộp</div>
<div class="c" style="left:746px;top:803px;width:94px;letter-spacing:-0.4px">157 Dược Vương</div>
<div class="c r" style="left:841px;top:803px;width:92px;padding-right:3px">91,00</div>
<div class="c r" style="left:934px;top:803px;width:159px;padding-right:3px">91,00</div>
<div class="c" style="left:369px;top:823px;width:110px;padding-left:6px">VT067</div>
<div class="c" style="left:480px;top:823px;width:183px;padding-left:5px">An Trí Khang</div>
<div class="c" style="left:664px;top:823px;width:76px;padding-left:5px">hộp</div>
<div class="a" style="left:744px;top:823px;width:77px;height:20px;background:#fff"></div>
<div class="c" style="left:747px;top:822px;width:60px">156</div>
<div class="c r" style="left:841px;top:823px;width:92px;padding-right:3px">(1.003,00)</div>
<div class="c r" style="left:934px;top:823px;width:159px;padding-right:3px">(1.003,00)</div>
<div class="c" style="left:369px;top:843px;width:110px;padding-left:6px">VT067</div>
<div class="c" style="left:480px;top:843px;width:183px;padding-left:5px">An Trí Khang</div>
<div class="c" style="left:664px;top:843px;width:76px;padding-left:5px">hộp</div>
<div class="c" style="left:746px;top:843px;width:94px;letter-spacing:-0.4px">157 Dược Vương</div>
<div class="c r" style="left:841px;top:843px;width:92px;padding-right:3px">34,00</div>
<div class="c r" style="left:934px;top:843px;width:159px;padding-right:3px">34,00</div>
<div class="c" style="left:369px;top:863px;width:110px;padding-left:6px">VT072</div>
<div class="c" style="left:480px;top:863px;width:183px;padding-left:5px">Dưỡng sắc khang</div>
<div class="c" style="left:664px;top:863px;width:76px;padding-left:5px">hộp</div>
<div class="a" style="left:744px;top:863px;width:77px;height:20px;background:#fff"></div>
<div class="c" style="left:748.5px;top:862px;width:60px">156</div>
<div class="c r" style="left:841px;top:863px;width:92px;padding-right:3px">75,00</div>
<div class="c r" style="left:934px;top:863px;width:159px;padding-right:3px">70,00</div>
<div class="c" style="left:369px;top:883px;width:110px;padding-left:6px">VT113</div>
<div class="c" style="left:480px;top:883px;width:183px;padding-left:5px">Bình Hãn Khang</div>
<div class="c" style="left:664px;top:883px;width:76px;padding-left:5px">hộp</div>
<div class="a" style="left:744px;top:883px;width:77px;height:20px;background:#fff"></div>
<div class="c" style="left:748.5px;top:882px;width:60px">156</div>
<div class="c r" style="left:841px;top:883px;width:92px;padding-right:3px">1.333,00</div>
<div class="c r" style="left:934px;top:883px;width:159px;padding-right:3px">1.333,00</div>
<div class="c" style="left:369px;top:903px;width:110px;padding-left:6px">VT113</div>
<div class="c" style="left:480px;top:903px;width:183px;padding-left:5px">Bình Hãn Khang</div>
<div class="c" style="left:664px;top:903px;width:76px;padding-left:5px">hộp</div>
<div class="c" style="left:746px;top:903px;width:94px;letter-spacing:-0.4px">157 Dược Vương</div>
<div class="c r" style="left:841px;top:903px;width:92px;padding-right:3px">20,00</div>
<div class="c r" style="left:934px;top:903px;width:159px;padding-right:3px">20,00</div>
<div class="a" style="left:740px;top:663px;width:101px;height:261px;border:3px solid #ee1111"></div>
<div class="a" style="left:369px;top:1030px;width:725px;height:17px;background:#fff;border-top:1px solid #84a9d9"></div>
<div class="a" style="left:369px;top:1031px;width:110px;height:16px;line-height:16px;background:#d4d4d4;padding-left:4px;white-space:nowrap"><span class="s">Số dòng = 11</span></div>
<div class="a" style="left:479px;top:1031px;width:1px;height:16px;background:#84a9d9"></div>
<div class="a" style="left:841px;top:1031px;width:92px;height:16px;line-height:16px;background:#d4d4d4;text-align:right;padding-right:3px"><span class="s">3.096,00</span></div>
<div class="a" style="left:934px;top:1031px;width:160px;height:16px;line-height:16px;background:#d4d4d4;text-align:right;padding-right:3px"><span class="s">3.088,00</span></div>
<div class="a" style="left:840px;top:1031px;width:1px;height:16px;background:#84a9d9"></div>
<div class="a" style="left:933px;top:1031px;width:1px;height:16px;background:#84a9d9"></div>
<div class="a" style="left:368px;top:1060px;width:75px;height:25px;background:#afc8ea;border:1px solid #8fb1de"></div>
<svg class="a" style="left:372px;top:1063.5px" width="16" height="16" viewBox="0 0 16 16"><circle cx="8" cy="8" r="7.200" fill="url(#gh)" stroke="#2a62b8" stroke-width="1"/><path d="M5.700 6.300c0-1.600 1.100-2.600 2.500-2.600 1.500 0 2.500.9 2.500 2.200 0 1.800-2.300 1.900-2.300 3.600" fill="none" stroke="#fff" stroke-width="1.800" stroke-linecap="round"/><circle cx="8.400" cy="12" r="1.100" fill="#fff"/></svg>
<div class="t" style="left:402px;top:1066px">Giúp</div>
<div class="a" style="left:929px;top:1060px;width:85px;height:25px;background:#afc8ea;border:1px solid #8fb1de"></div>
<svg class="a" style="left:933px;top:1063.5px" width="16" height="16" viewBox="0 0 16 16"><path d="M10.500 2.700h4.700L4.700 14H0z" fill="#2a9a22" stroke="#167a14" stroke-width=".5"/><path d="M0 2.700h4.700L15.400 14h-4.700z" fill="#3fbf30" stroke="#167a14" stroke-width=".5"/><path d="M1.500 3.400h2.700l9.500 10" fill="none" stroke="#8fe878" stroke-width=".8"/><path d="M9 10.800h5.500M9.800 12.600h5" stroke="#1a7a18" stroke-width=".9"/></svg>
<div class="t" style="left:954px;top:1066px">Xuất khẩu</div>
<div class="a" style="left:1020px;top:1060px;width:75px;height:25px;background:#afc8ea;border:1px solid #8fb1de"></div>
<svg class="a" style="left:1024px;top:1063.5px" width="16" height="16" viewBox="0 0 16 16"><rect x=".3" y=".3" width="15.400" height="15.400" rx="2" fill="#fff6f2"/><rect x="1.400" y="1.400" width="13.200" height="13.200" rx="1.200" fill="url(#gr)"/><circle cx="8" cy="8" r="4.200" fill="none" stroke="#fff" stroke-width="1.800"/><path d="M8 6v4" stroke="#fff" stroke-width="1.600" stroke-linecap="round"/></svg>
<div class="t" style="left:1052px;top:1066px">Đóng</div>
<svg class="a" style="left:140px;top:590px;overflow:visible" width="240" height="80" viewBox="140 590 240 80"><defs><filter id="sh" x="-10%" y="-30%" width="120%" height="180%"><feGaussianBlur in="SourceAlpha" stdDeviation="1.2"/><feOffset dx="1" dy="2"/><feComponentTransfer><feFuncA type="linear" slope=".55"/></feComponentTransfer><feMerge><feMergeNode/><feMergeNode in="SourceGraphic"/></feMerge></filter></defs><g filter="url(#sh)"><path d="M157.500 604.300L347 645.500" stroke="#ee1111" stroke-width="4.600" stroke-linecap="round" fill="none"/><path d="M359 648.300l-14.800 3.900 5-13.500z" fill="#ee1111"/></g></svg>
</body></html>
